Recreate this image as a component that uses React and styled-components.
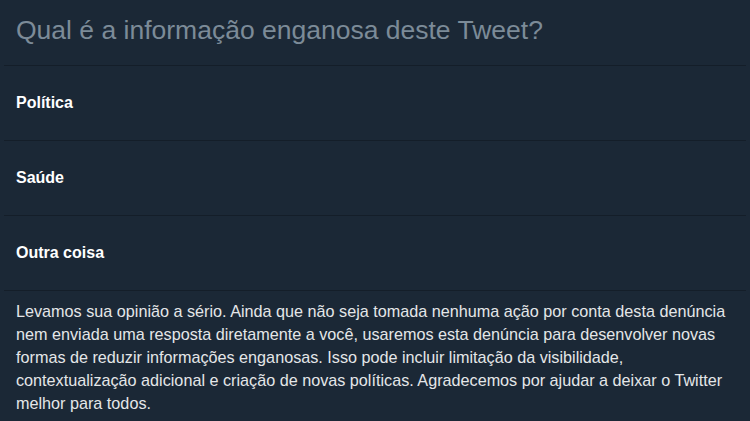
import React from "react";
import styled, { createGlobalStyle } from "styled-components";

const Global = createGlobalStyle`
  html, body { margin: 0; padding: 0; background: #1b2836; }
  body { font-family: "Liberation Sans", Arial, sans-serif; }
`;

const Page = styled.div`
  width: 750px;
  height: 421px;
  background: #1b2836;
  overflow: hidden;
  display: flex;
  flex-direction: column;
`;

const Header = styled.div`
  height: 65px;
  display: flex;
  align-items: center;
  padding: 0 16px 4px;
  box-sizing: border-box;
`;

const Title = styled.h1`
  margin: 0;
  font-size: 26.5px;
  font-weight: 400;
  color: #7c8b98;
  letter-spacing: 0;
`;

const Divider = styled.div`
  height: 1px;
  margin: 0 4px;
  background: #141e29;
`;

const Option = styled.div`
  height: 74px;
  display: flex;
  align-items: center;
  padding: 0 16px 1px;
  box-sizing: border-box;
  font-size: 16px;
  font-weight: 700;
  color: #ffffff;
`;

const Note = styled.p`
  margin: 0;
  padding: 9px 16px 0;
  font-size: 16.2px;
  line-height: 23px;
  color: #e4e6e8;
`;

const options = ["Política", "Saúde", "Outra coisa"];

export default function App() {
  return (
    <Page>
      <Global />
      <Header>
        <Title>Qual é a informação enganosa deste Tweet?</Title>
      </Header>
      {options.map((o) => (
        <React.Fragment key={o}>
          <Divider />
          <Option>{o}</Option>
        </React.Fragment>
      ))}
      <Divider />
      <Note>
        Levamos sua opinião a sério. Ainda que não seja tomada nenhuma ação por conta desta denúncia
        nem enviada uma resposta diretamente a você, usaremos esta denúncia para desenvolver novas
        formas de reduzir informações enganosas. Isso pode incluir limitação da visibilidade,
        contextualização adicional e criação de novas políticas. Agradecemos por ajudar a deixar o Twitter
        melhor para todos.
      </Note>
    </Page>
  );
}
